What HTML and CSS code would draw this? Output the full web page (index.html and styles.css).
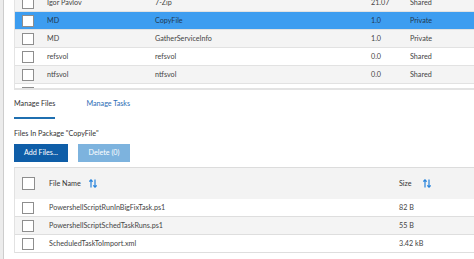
FILE: index.html
```html
<!DOCTYPE html>
<html>
<head>
<meta charset="utf-8">
<link rel="stylesheet" href="styles.css">
</head>
<body>
<div class="app">
  <div class="sidebar"></div>
  <div class="main">
    <div class="pkg-panel">
      <div class="pkg-list">
        <div class="prow alt"><span class="cb"></span><span>Igor Pavlov</span><span>7-Zip</span><span>21.07</span><span>Shared</span></div>
        <div class="prow selected"><span class="cb"></span><span>MD</span><span>CopyFile</span><span>1.0</span><span>Private</span></div>
        <div class="prow alt"><span class="cb"></span><span>MD</span><span>GatherServiceInfo</span><span>1.0</span><span>Private</span></div>
        <div class="prow"><span class="cb"></span><span>refsvol</span><span>refsvol</span><span>0.0</span><span>Shared</span></div>
        <div class="prow alt"><span class="cb"></span><span>ntfsvol</span><span>ntfsvol</span><span>0.0</span><span>Shared</span></div>
        <div class="prow"><span class="cb"></span><span></span><span></span><span></span><span></span></div>
      </div>
    </div>

    <div class="tabs">
      <span class="tab active">Manage Files</span>
      <span class="tab">Manage Tasks</span>
    </div>

    <div class="pkg-label">Files In Package "CopyFile"</div>

    <div class="buttons">
      <span class="btn primary">Add Files...</span>
      <span class="btn disabled">Delete (0)</span>
    </div>

    <div class="files">
      <div class="frow head">
        <span class="cb"></span>
        <span class="hcell">File Name <svg class="sort" viewBox="0 0 8 9" width="8" height="9"><path d="M2 8.5V0.8M0.3 2.6L2 0.8L3.7 2.6M6 0.5V8.2M4.3 6.4L6 8.2L7.7 6.4" fill="none" stroke="currentColor" stroke-width="1.2"/></svg></span>
        <span class="hcell wide">Size <svg class="sort" viewBox="0 0 8 9" width="8" height="9"><path d="M2 8.5V0.8M0.3 2.6L2 0.8L3.7 2.6M6 0.5V8.2M4.3 6.4L6 8.2L7.7 6.4" fill="none" stroke="currentColor" stroke-width="1.2"/></svg></span>
      </div>
      <div class="frow"><span class="cb"></span><span>PowershellScriptRunInBigFixTask.ps1</span><span>82 B</span></div>
      <div class="frow alt"><span class="cb"></span><span>PowershellScriptSchedTaskRuns.ps1</span><span>55 B</span></div>
      <div class="frow"><span class="cb"></span><span>ScheduledTaskToImport.xml</span><span>3.42 kB</span></div>
    </div>
  </div>
</div>
</body>
</html>
```

FILE: styles.css
```css
html, body {
  margin: 0;
  padding: 0;
  background: #ffffff;
}

body {
  font-family: Lato, "Open Sans", sans-serif;
  font-size: 7.2px;
  color: #444444;
  width: 474px;
  height: 259px;
  overflow: hidden;
}

.app {
  display: flex;
  height: 259px;
}

.sidebar {
  width: 3px;
  background: #ececec;
  border-right: 1px solid #cdcdcd;
  flex: none;
}

.main {
  flex: 1;
  padding-left: 10px;
  overflow: hidden;
}

.pkg-panel {
  height: 88px;
  border-left: 1px solid #e4e4e4;
  border-bottom: 2px solid #e3e3e3;
  overflow: hidden;
}

.pkg-list {
  margin-top: -6px;
}

.prow {
  display: grid;
  grid-template-columns: 32px 108px 216px 39px 1fr;
  align-items: center;
  height: 17px;
  border-bottom: 1px solid #e2e2e2;
  background: #ffffff;
  white-space: nowrap;
}

.prow.alt {
  background: #f4f4f4;
}

.prow.selected {
  background: #3d9df0;
  color: #233a52;
}

.cb {
  display: block;
  width: 10px;
  height: 10px;
  border: 1px solid #8e8e8e;
  background: #ffffff;
  margin-left: 7px;
  box-sizing: content-box;
}

.tabs {
  display: flex;
  gap: 31px;
}

.tab {
  line-height: 10px;
  padding: 9px 0 8px;
  border-bottom: 2px solid transparent;
  color: #2d6db5;
}

.tab.active {
  color: #333333;
  border-bottom-color: #1f6fb0;
}

.pkg-label {
  line-height: 10px;
  margin-top: 10px;
  color: #333333;
}

.buttons {
  display: flex;
  gap: 10px;
  margin-top: 5px;
}

.btn {
  height: 18px;
  line-height: 18px;
  text-align: center;
  color: #ffffff;
}

.btn.primary {
  width: 54px;
  background: #0f5ea8;
}

.btn.disabled {
  width: 52px;
  background: #7db3de;
}

.files {
  margin-top: 5px;
  border-top: 1px solid #dcdcdc;
  border-left: 1px solid #e2e2e2;
}

.frow {
  display: grid;
  grid-template-columns: 34px 350px 1fr;
  align-items: center;
  height: 17px;
  border-bottom: 1px solid #dedede;
  background: #ffffff;
  white-space: nowrap;
}

.frow.alt {
  background: #f4f4f4;
}

.frow.head {
  height: 31px;
  border-bottom: none;
  background: #f3f3f3;
  color: #333333;
}

.frow.head .cb {
  width: 11px;
  height: 11px;
}

.hcell {
  display: flex;
  align-items: center;
  gap: 8px;
}

.hcell.wide {
  gap: 11px;
}

.sort {
  color: #2683dc;
}
```
